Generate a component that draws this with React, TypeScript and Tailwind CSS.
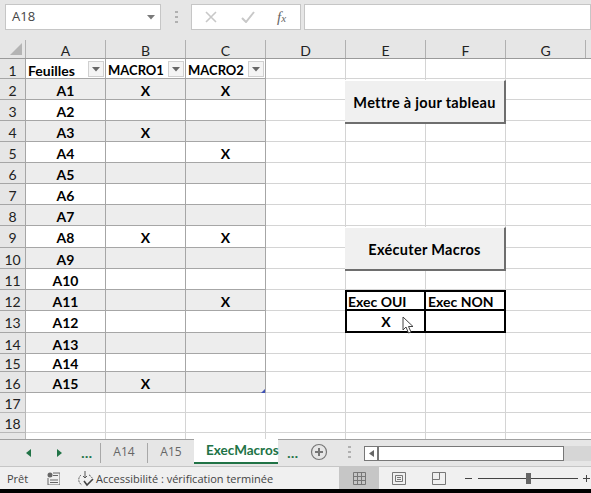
import React from "react";

const rows = [
  { n: 1, h: "h-[20px]", a: "Feuilles", b: "MACRO1", c: "MACRO2", head: true },
  { n: 2, h: "h-[21px]", a: "A1", b: "X", c: "X", band: true },
  { n: 3, h: "h-[21px]", a: "A2" },
  { n: 4, h: "h-[21px]", a: "A3", b: "X", band: true },
  { n: 5, h: "h-[21px]", a: "A4", c: "X" },
  { n: 6, h: "h-[21px]", a: "A5", band: true },
  { n: 7, h: "h-[21px]", a: "A6" },
  { n: 8, h: "h-[21px]", a: "A7", band: true },
  { n: 9, h: "h-[22px]", a: "A8", b: "X", c: "X" },
  { n: 10, h: "h-[21px]", a: "A9", band: true },
  { n: 11, h: "h-[21px]", a: "A10" },
  { n: 12, h: "h-[21px]", a: "A11", c: "X", band: true, e: "Exec OUI", f: "Exec NON", box: true },
  { n: 13, h: "h-[22px]", a: "A12", e: "X", box: true, center: true },
  { n: 14, h: "h-[21px]", a: "A13", band: true },
  { n: 15, h: "h-[18px]", a: "A14" },
  { n: 16, h: "h-[21px]", a: "A15", b: "X", band: true },
  { n: 17, h: "h-[20px]", a: "" },
  { n: 18, h: "h-[20px]", a: "" },
  { n: 19, h: "h-[20px]", a: "" },
] as Array<any>;

function Filter() {
  return (
    <span className="absolute right-[1px] top-[2px] flex h-[16px] w-[16px] items-center justify-center border border-[#d0d0d0] bg-[#f4f4f4]">
      <svg width="8" height="5" viewBox="0 0 8 5"><path d="M0 0h8L4 4.5z" fill="#666" /></svg>
    </span>
  );
}

function Cell({ r, v, w, head, small }: { r: any; v?: string; w: string; head?: boolean; small?: boolean }) {
  const styled = r.n <= 16;
  const bg = r.band ? "bg-[#ededed]" : "bg-white";
  const borders = styled
    ? "border-r border-b border-[#a6a6a6]"
    : "border-r border-b border-[#d4d4d4]";
  return (
    <div className={`relative flex shrink-0 items-center ${head ? "pt-[4px]" : "pt-[2px]"} ${w} ${bg} ${borders} ${head ? "justify-start pl-[2px]" : "justify-center"} ${small ? "text-[13px]" : "text-[14px]"} font-bold text-black`}>
      {v}
      {head && <Filter />}
    </div>
  );
}

function Plain({ w }: { w: string }) {
  return <div className={`shrink-0 border-r border-b border-[#d4d4d4] bg-white ${w}`} />;
}

function Button({ label, cls }: { label: string; cls: string }) {
  return (
    <div className={`absolute left-[345px] flex w-[161px] items-center justify-center border-t border-r-2 border-b-2 border-t-white border-r-[#6e6e6e] border-b-[#6e6e6e] bg-[#f0f0f0] pt-[2px] text-[14.5px] font-bold tracking-[0.3px] text-black ${cls}`}>
      {label}
    </div>
  );
}

function Dots({ cls }: { cls: string }) {
  return (
    <span className={`flex w-[4px] flex-col items-center justify-center gap-[3px] ${cls}`}>
      <i className="block h-[2px] w-[3px] bg-[#b0b0b0]" />
      <i className="block h-[2px] w-[3px] bg-[#b0b0b0]" />
      <i className="block h-[2px] w-[3px] bg-[#b0b0b0]" />
    </span>
  );
}

export default function App() {
  return (
    <div className="relative h-[493px] w-[591px] overflow-hidden bg-[#e6e6e6] font-['Lato',sans-serif] text-black">
      {/* formula bar */}
      <div className="flex h-[40px] items-start pt-[4px]">
        <div className="ml-[5px] flex h-[26px] w-[156px] items-center justify-between border border-[#c6c6c6] bg-white pr-[5px] pl-[6px] font-['Open_Sans',sans-serif] text-[13px] text-[#444]">
          A18
          <svg width="8" height="5" viewBox="0 0 8 5"><path d="M0 0h8L4 4.5z" fill="#7a7a7a" /></svg>
        </div>
        <Dots cls="ml-[13px] h-[26px]" />
        <div className="ml-[13px] flex h-[26px] w-[110px] items-center border border-[#c6c6c6] bg-white">
          <svg className="ml-[13px]" width="12" height="12" viewBox="0 0 12 12"><path d="M1 1l10 10M11 1L1 11" stroke="#c8c8c8" strokeWidth="1.6" /></svg>
          <svg className="ml-[24px]" width="14" height="12" viewBox="0 0 14 12"><path d="M1 7l4 4 8-10" stroke="#c8c8c8" strokeWidth="2" fill="none" /></svg>
          <span className="ml-[22px] font-['Liberation_Serif',serif] text-[15px] leading-none text-[#666] italic">f<span className="text-[11px]">x</span></span>
        </div>
        <div className="ml-[3px] h-[26px] flex-1 border border-[#c6c6c6] bg-white" />
      </div>

      {/* column header */}
      <div className="flex h-[19px] border-b border-[#9a9a9a] bg-[#e6e6e6] text-[14px] text-[#222]">
        <div className="relative w-[26px] shrink-0 border-r border-[#b0b0b0]">
          <svg className="absolute right-[3px] bottom-[3px]" width="12" height="12" viewBox="0 0 12 12"><path d="M12 0v12H0z" fill="#b4b4b4" /></svg>
        </div>
        {["A", "B", "C", "D", "E", "F", "G"].map((c) => (
          <div key={c} className="flex w-[80px] shrink-0 items-center justify-center border-r border-[#b0b0b0] pt-[2px]">{c}</div>
        ))}
        <div className="flex-1" />
      </div>

      {/* sheet */}
      <div className="h-[380px] overflow-hidden">
        {rows.map((r) => (
          <div key={r.n} className={`flex ${r.h}`}>
            <div className={`flex w-[26px] shrink-0 items-center justify-center border-r border-b bg-[#e6e6e6] ${r.head ? "pt-[4px]" : "pt-[2px]"} text-[14px] text-[#222] ${r.n <= 16 ? "border-[#a6a6a6]" : "border-[#b8b8b8]"}`}>{r.n < 19 ? r.n : ""}</div>
            <Cell r={r} v={r.a} w="w-[80px]" head={r.head} />
            <Cell r={r} v={r.b} w="w-[80px]" head={r.head} small={r.head} />
            <Cell r={r} v={r.c} w="w-[80px]" head={r.head} small={r.head} />
            <Plain w="w-[80px]" />
            {r.box ? (
              <>
                <div className={`-ml-[1px] flex w-[81px] shrink-0 items-center border-2 border-black bg-white pt-[1px] pl-[1px] text-[14px] font-bold ${r.center ? "justify-center border-t-0" : ""}`}>{r.e}</div>
                <div className={`flex w-[80px] shrink-0 items-center border-y-2 border-r-2 border-black bg-white pt-[1px] pl-[2px] text-[14px] font-bold ${r.center ? "border-t-0" : ""}`}>{r.f}</div>
              </>
            ) : (
              <>
                <Plain w="w-[80px]" />
                <Plain w="w-[80px]" />
              </>
            )}
            <div className="flex-1 border-b border-[#d4d4d4] bg-white" />
          </div>
        ))}
      </div>

      {/* corner handle of the table */}
      <div className="absolute top-[389px] left-[261px] h-[4px] w-[4px] bg-[#3f51b5] [clip-path:polygon(100%_0,100%_100%,0_100%)]" />

      <Button label="Mettre à jour tableau" cls="top-[80px] h-[44px]" />
      <Button label="Exécuter Macros" cls="top-[227px] h-[44px]" />

      {/* mouse pointer */}
      <svg className="absolute top-[316px] left-[402px]" width="13" height="19" viewBox="0 0 13 19">
        <path d="M1 1v13l3-3 2.5 6 2.5-1-2.5-5.5H11z" fill="#fff" stroke="#444" strokeWidth="1" />
      </svg>

      {/* tabs */}
      <div className="absolute top-[439px] left-0 flex h-[27px] w-[591px] items-start border-t border-[#a0a0a0] bg-[#e6e6e6] font-['Open_Sans',sans-serif] text-[12px] text-[#666]">
        <svg className="mt-[9px] ml-[26px]" width="5" height="8" viewBox="0 0 5 8"><path d="M5 0v8L0 4z" fill="#217346" /></svg>
        <svg className="mt-[9px] ml-[26px]" width="5" height="8" viewBox="0 0 5 8"><path d="M0 0v8l5-4z" fill="#217346" /></svg>
        <span className="mt-[4px] ml-[19px] w-[19px] text-[13px] leading-[18px] font-bold text-[#217346]">...</span>
        <span className="mt-[3px] h-[20px] border-l border-[#a8a8a8]" />
        <span className="flex h-[24px] w-[46px] items-center justify-center">A14</span>
        <span className="mt-[3px] h-[20px] border-l border-[#a8a8a8]" />
        <span className="flex h-[24px] w-[46px] items-center justify-center">A15</span>
        <span className="-mt-[1px] flex h-[25px] w-[84px] items-center justify-start border-b-2 border-[#217346] bg-white pl-[12px] font-['Lato',sans-serif] text-[13.5px] font-bold text-[#217346]">ExecMacros</span>
        <span className="mt-[4px] ml-[9px] w-[18px] text-[13px] leading-[18px] font-bold text-[#217346]">...</span>
        <svg className="mt-[3px] ml-[5px]" width="18" height="18" viewBox="0 0 18 18">
          <circle cx="9" cy="9" r="7.5" fill="none" stroke="#777" strokeWidth="1.2" />
          <path d="M9 5v8M5 9h8" stroke="#777" strokeWidth="2" />
        </svg>
        <Dots cls="mt-[3px] ml-[19px] h-[18px]" />
        <div className="mt-[6px] ml-[13px] flex h-[15px] flex-1 bg-[#d6d6d6]">
          <div className="flex h-[15px] w-[200px] items-stretch border border-[#777] bg-white">
            <span className="flex w-[14px] items-center justify-center border-r-2 border-[#777]">
              <svg width="5" height="7" viewBox="0 0 5 7"><path d="M5 0v7L0 3.5z" fill="#666" /></svg>
            </span>
          </div>
        </div>
      </div>

      {/* status bar */}
      <div className="absolute top-[466px] left-0 flex h-[23px] w-[591px] items-center border-t border-[#c6c6c6] bg-[#f0f0f0] font-['Open_Sans',sans-serif] text-[11px] text-[#444]">
        <div className="flex w-[339px] shrink-0 items-center">
          <span className="ml-[7px] w-[40px] pt-[2px]">Prêt</span>
          <svg width="13" height="13" viewBox="0 0 13 13"><circle cx="3" cy="3" r="2.5" fill="#666" /><path d="M6 1h7v12H1V6" fill="none" stroke="#666" /><path d="M3 8h8M3 10.5h8M6 3.5h5" stroke="#666" /></svg>
          <svg className="ml-[18px] mr-[2px]" width="16" height="17" viewBox="0 0 16 17">
            <path d="M3 5A6 6 0 0 0 4 15M11 5a6 6 0 0 1 3 3" fill="none" stroke="#555" strokeDasharray="2 1" />
            <path d="M7 1v7M5 6l2 2 2-2" fill="none" stroke="#555" />
            <path d="M6 11l3 4 6-6" fill="none" stroke="#444" strokeWidth="1.6" />
          </svg>
          <span className="pt-[2px]">Accessibilité : vérification terminée</span>
        </div>
        <div className="flex h-[22px] w-[40px] items-center justify-center bg-[#c6c6c6]">
          <svg width="13" height="13" viewBox="0 0 13 13"><path d="M.5.5h12v12H.5zM4.5.5v12M8.5.5v12M.5 4.5h12M.5 8.5h12" fill="none" stroke="#777" /></svg>
        </div>
        <div className="flex h-[22px] w-[40px] items-center justify-center">
          <svg width="14" height="13" viewBox="0 0 14 13"><path d="M.5.5h13v12H.5z" fill="none" stroke="#777" /><path d="M3.5 3.5h7v6h-7zM5 5.5h4M5 7.5h4" fill="none" stroke="#777" /></svg>
        </div>
        <div className="flex h-[22px] w-[40px] items-center justify-center">
          <svg width="14" height="13" viewBox="0 0 14 13"><path d="M.5.5h13v12H.5zM7.5.5v7H.5" fill="none" stroke="#777" /></svg>
        </div>
        <span className="ml-[6px] h-[1px] w-[7px] bg-[#444]" />
        <div className="relative ml-[6px] h-[1px] w-[100px] bg-[#444]">
          <span className="absolute top-[-5px] left-[48px] h-[11px] w-[5px] bg-[#666]" />
        </div>
        <span className="relative ml-[5px] h-[1px] w-[7px] bg-[#444]">
          <span className="absolute top-[-3px] left-[3px] h-[7px] w-[1px] bg-[#444]" />
        </span>
      </div>
      <div className="absolute top-[489px] left-0 h-[4px] w-[591px] bg-black" />
    </div>
  );
}
